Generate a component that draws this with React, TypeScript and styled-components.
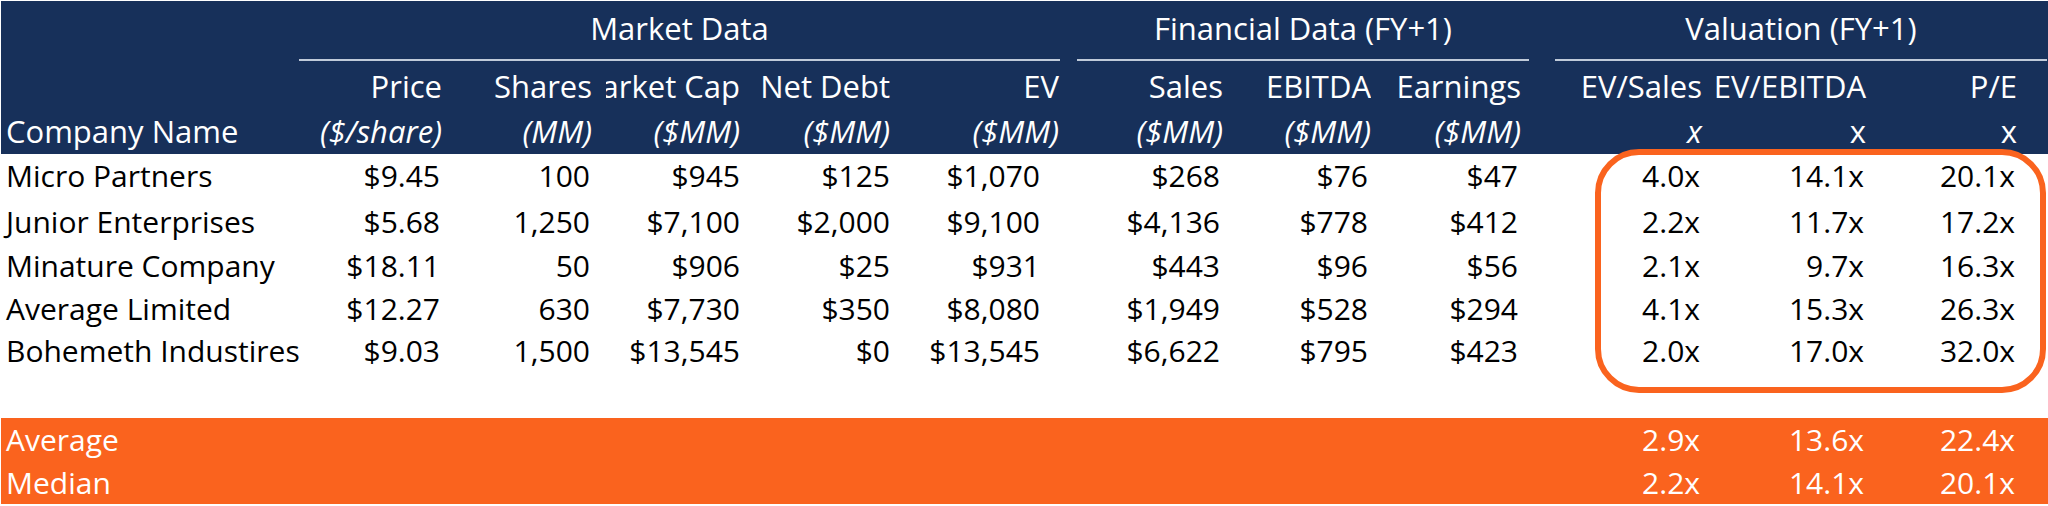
import React from "react";
import styled, { createGlobalStyle } from "styled-components";

const navy = "#17305a";
const orange = "#fa631e";

const GlobalStyle = createGlobalStyle`
  body {
    margin: 0;
    background: #ffffff;
    font-family: "Open Sans", "Noto Sans", sans-serif;
  }
`;

// name, Price, Shares, Mkt Cap, Net Debt, EV, gap, Sales, EBITDA, Earnings, gap, EV/Sales, EV/EBITDA, P/E, end
const gridCols =
  "298px 147px 150px 150px 150px 164px 17px 146px 148px 158px 26px 151px 164px 151px 26px";
const dataPads = [0, 6, 6, 6, 6, 20, 0, 3, 3, 11, 0, 6, 6, 6, 0];
const headPads = [0, 4, 4, 6, 6, 1, 0, 0, 0, 8, 0, 4, 4, 4, 0];
const rowHeights = [46, 44, 43, 42, 44];

const Sheet = styled.div`
  position: relative;
  width: 2047px;
  padding: 1px 0 0 1px;
`;

const Header = styled.div`
  background: ${navy};
  color: #ffffff;
`;

const Row = styled.div<{ $h: number; $size: number; $top?: number }>`
  display: grid;
  grid-template-columns: ${gridCols};
  box-sizing: border-box;
  height: ${(p) => p.$h}px;
  padding-top: ${(p) => p.$top || 0}px;
  font-size: ${(p) => p.$size}px;
  line-height: 44px;
`;

const Group = styled.div<{ $from: number; $to: number }>`
  grid-column: ${(p) => p.$from} / ${(p) => p.$to};
  text-align: center;
  padding-top: 5px;
  border-bottom: 2px solid rgba(222, 229, 240, 0.85);
  white-space: nowrap;
`;

const Cell = styled.div<{ $pr: number; $italic?: boolean; $inset?: number }>`
  display: flex;
  justify-content: flex-end;
  overflow: hidden;
  white-space: nowrap;
  margin-left: ${(p) => p.$inset || 0}px;
  padding-right: ${(p) => p.$pr}px;
  font-style: ${(p) => (p.$italic ? "italic" : "normal")};
`;

const NameCell = styled.div`
  padding-left: 5px;
  white-space: nowrap;
`;

const Spacer = styled.div`
  height: 45px;
`;

const Summary = styled.div`
  background: ${orange};
  color: #ffffff;
`;

const Highlight = styled.div`
  position: absolute;
  left: 1595px;
  top: 149px;
  width: 451px;
  height: 244px;
  box-sizing: border-box;
  border: 6px solid ${orange};
  border-radius: 44px;
  pointer-events: none;
`;

const titles = ["", "Price", "Shares", "Market Cap", "Net Debt", "EV", "", "Sales", "EBITDA", "Earnings", "", "EV/Sales", "EV/EBITDA", "P/E", ""];
const units = ["Company Name", "($/share)", "(MM)", "($MM)", "($MM)", "($MM)", "", "($MM)", "($MM)", "($MM)", "", "x", "x", "x", ""];
const italicUnits = [false, true, true, true, true, true, false, true, true, true, false, true, false, false, false];
// the Market Cap title spills into Shares and gets cut, as in the sheet
const titleInsets = [0, 0, 0, 10, 0, 0, 0, 0, 0, 0, 0, 0, 0, 0, 0];

const companies = [
  ["Micro Partners", "$9.45", "100", "$945", "$125", "$1,070", "", "$268", "$76", "$47", "", "4.0x", "14.1x", "20.1x", ""],
  ["Junior Enterprises", "$5.68", "1,250", "$7,100", "$2,000", "$9,100", "", "$4,136", "$778", "$412", "", "2.2x", "11.7x", "17.2x", ""],
  ["Minature Company", "$18.11", "50", "$906", "$25", "$931", "", "$443", "$96", "$56", "", "2.1x", "9.7x", "16.3x", ""],
  ["Average Limited", "$12.27", "630", "$7,730", "$350", "$8,080", "", "$1,949", "$528", "$294", "", "4.1x", "15.3x", "26.3x", ""],
  ["Bohemeth Industires", "$9.03", "1,500", "$13,545", "$0", "$13,545", "", "$6,622", "$795", "$423", "", "2.0x", "17.0x", "32.0x", ""],
];

const stats = [
  ["Average", "", "", "", "", "", "", "", "", "", "", "2.9x", "13.6x", "22.4x", ""],
  ["Median", "", "", "", "", "", "", "", "", "", "", "2.2x", "14.1x", "20.1x", ""],
];

interface LineProps {
  cells: string[];
  h: number;
  size: number;
  pads: number[];
  top?: number;
  italics?: boolean[];
  insets?: number[];
}

const Line = ({ cells, h, size, pads, top, italics, insets }: LineProps): JSX.Element => (
  <Row $h={h} $size={size} $top={top}>
    {cells.map((c, i) =>
      i === 0 ? (
        <NameCell key={i}>{c}</NameCell>
      ) : (
        <Cell
          key={i}
          $pr={pads[i]}
          $italic={italics ? italics[i] : false}
          $inset={insets ? insets[i] : 0}
        >
          {c}
        </Cell>
      )
    )}
  </Row>
);

const App = (): JSX.Element => {
  return (
    <Sheet>
      <GlobalStyle />
      <Header>
        <Row $h={60} $size={31}>
          <Group $from={2} $to={7}>Market Data</Group>
          <Group $from={8} $to={11}>Financial Data (FY+1)</Group>
          <Group $from={12} $to={16}>Valuation (FY+1)</Group>
        </Row>
        <Line cells={titles} h={46} size={31} top={3} pads={headPads} insets={titleInsets} />
        <Line cells={units} h={47} size={31} top={2} pads={headPads} italics={italicUnits} />
      </Header>
      {companies.map((row, i) => (
        <Line key={row[0]} cells={row} h={rowHeights[i]} size={30} pads={dataPads} />
      ))}
      <Spacer />
      <Summary>
        {stats.map((row) => (
          <Line key={row[0]} cells={row} h={43} size={30} pads={dataPads} />
        ))}
      </Summary>
      <Highlight />
    </Sheet>
  );
};

export default App;
